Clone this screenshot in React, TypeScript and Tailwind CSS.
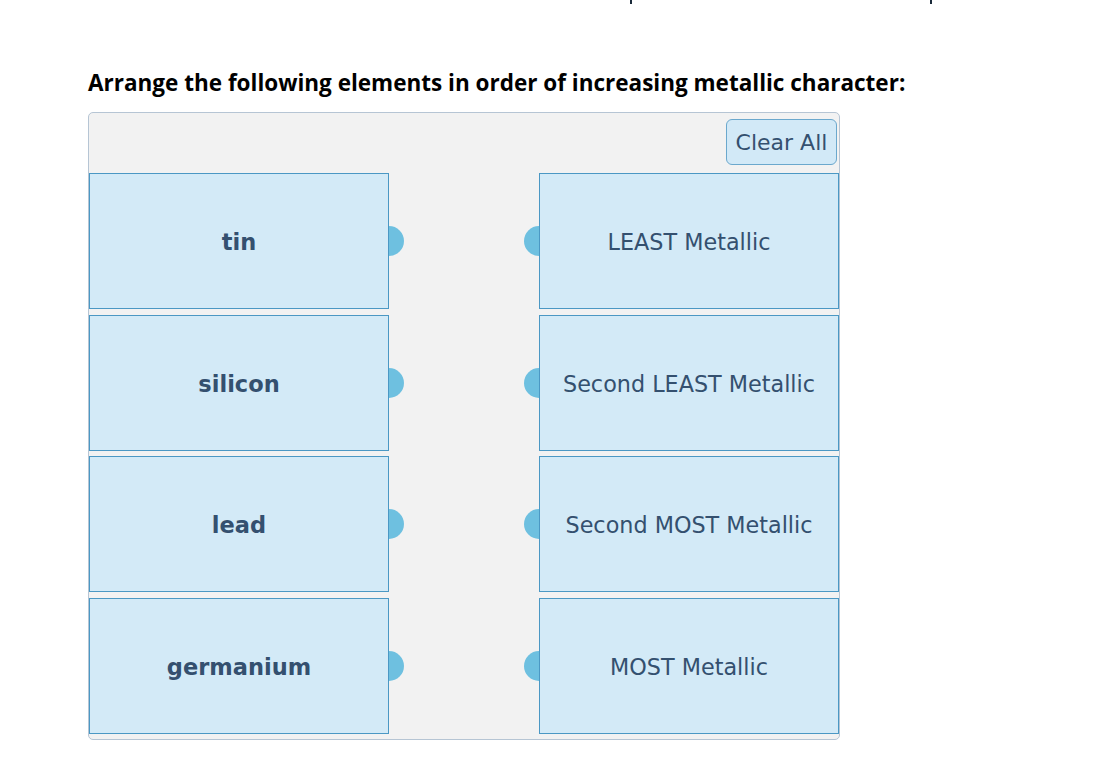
import React from "react";

const lefts = ["tin", "silicon", "lead", "germanium"];
const rights = ["LEAST Metallic", "Second LEAST Metallic", "Second MOST Metallic", "MOST Metallic"];

export default function App() {
  return (
    <div className="w-[1117px] h-[766px] bg-white overflow-hidden">
      <div className="flex h-[4px]">
        <div className="ml-[630px] w-[2px] h-[4px] bg-[#1a2a3a]" />
        <div className="ml-[298px] w-[2px] h-[4px] bg-[#1a2a3a]" />
      </div>
      <div className="pl-[88px]">
        <h1
          className="mt-[64px] mb-[14px] text-[22.5px] leading-[30px] font-bold text-black"
          style={{ fontFamily: '"Open Sans", sans-serif' }}
        >
          Arrange the following elements in order of increasing metallic character:
        </h1>
        <div
          className="w-[752px] border border-[#b6c5d4] rounded-[5px] bg-[#f2f2f2] pt-[6px] pb-[5.5px]"
          style={{ fontFamily: '"DejaVu Sans", Verdana, sans-serif' }}
        >
          <div className="flex justify-end pr-[2px] mb-[8px]">
            <button className="h-[46px] w-[111px] border border-[#6ba8cd] rounded-[6px] bg-[#d2e9f7] text-[22px] text-[#34506f]">
              Clear All
            </button>
          </div>
          <div className="flex flex-col gap-[5.5px]">
            {lefts.map((l, i) => (
              <div key={l} className="relative flex justify-between h-[136px]">
                <div className="absolute left-[285px] top-[53px] w-[30px] h-[30px] rounded-full bg-[#6ec0e0]" />
                <div className="absolute left-[435px] top-[53px] w-[30px] h-[30px] rounded-full bg-[#6ec0e0]" />
                <div className="relative z-10 w-[300px] h-[136px] pt-[4px] border border-[#4b98c4] bg-[#d3eaf7] flex items-center justify-center text-[22.5px] font-bold text-[#34506f]">
                  {l}
                </div>
                <div className="relative z-10 w-[300px] h-[136px] pt-[4px] border border-[#4b98c4] bg-[#d3eaf7] flex items-center justify-center text-[22.3px] text-[#34506f]">
                  {rights[i]}
                </div>
              </div>
            ))}
          </div>
        </div>
      </div>
    </div>
  );
}
